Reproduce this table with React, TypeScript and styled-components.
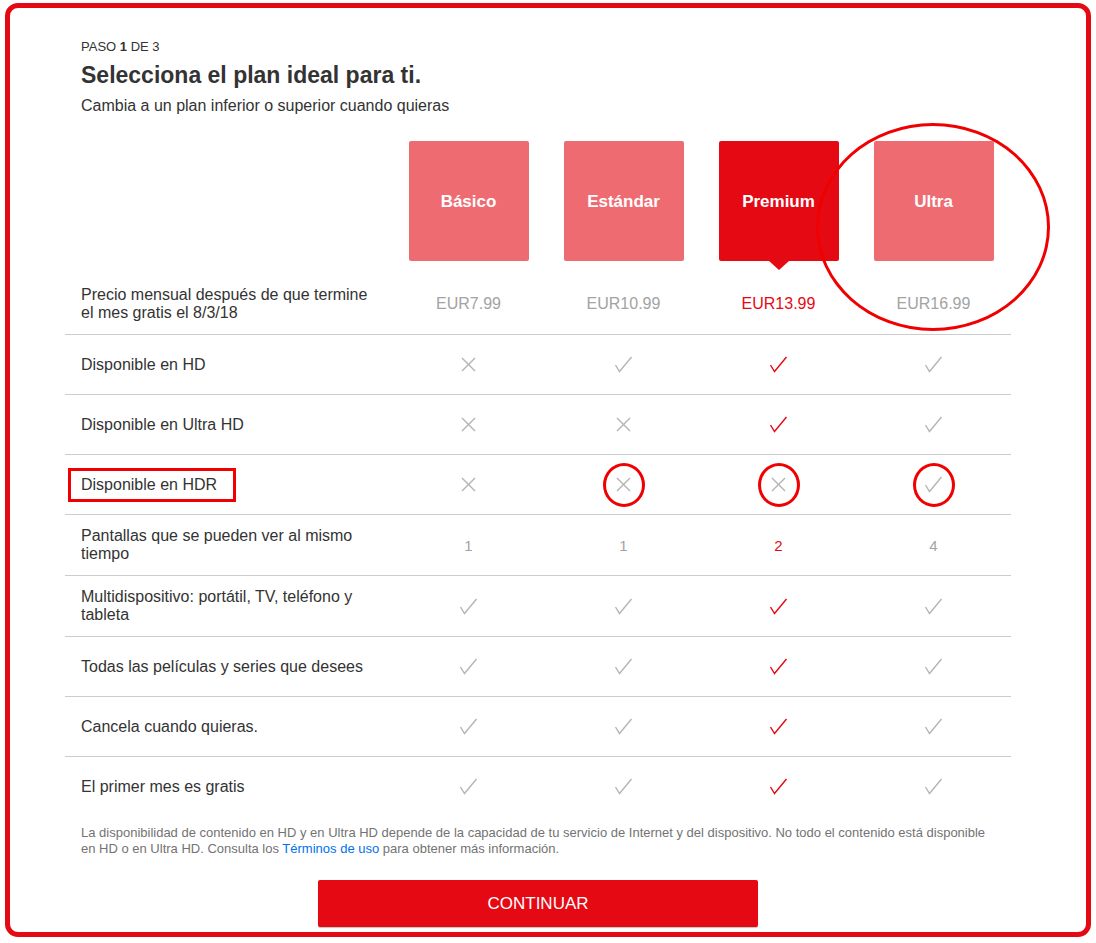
import * as React from 'react';
import styled, { createGlobalStyle } from 'styled-components';

const RED = '#e50914';
const MARK = '#f00000';

const GlobalStyle = createGlobalStyle`
  html, body {
    margin: 0;
    padding: 0;
    background: #fff;
  }
  body {
    font-family: "Liberation Sans", Arial, Helvetica, sans-serif;
    color: #333;
  }
`;

type Plan = { name: string, price: string, active?: boolean };

const plans: Plan[] = [
  { name: 'Básico', price: 'EUR7.99' },
  { name: 'Estándar', price: 'EUR10.99' },
  { name: 'Premium', price: 'EUR13.99', active: true },
  { name: 'Ultra', price: 'EUR16.99' },
];

// y = check, n = cross, anything else is printed as text
type Feature = { label: string, values: string[], markLabel?: boolean, markCells?: number[] };

const features: Feature[] = [
  { label: 'Disponible en HD', values: ['n', 'y', 'y', 'y'] },
  { label: 'Disponible en Ultra HD', values: ['n', 'n', 'y', 'y'] },
  { label: 'Disponible en HDR', values: ['n', 'n', 'n', 'y'], markLabel: true, markCells: [1, 2, 3] },
  { label: 'Pantallas que se pueden ver al mismo tiempo', values: ['1', '1', '2', '4'] },
  { label: 'Multidispositivo: portátil, TV, teléfono y tableta', values: ['y', 'y', 'y', 'y'] },
  { label: 'Todas las películas y series que desees', values: ['y', 'y', 'y', 'y'] },
  { label: 'Cancela cuando quieras.', values: ['y', 'y', 'y', 'y'] },
  { label: 'El primer mes es gratis', values: ['y', 'y', 'y', 'y'] },
];

const Check = ({ color }: { color: string }) => (
  <svg width="19" height="17" viewBox="0 0 19 17">
    <polyline points="1.5,9 5.5,15.5 17.5,1" fill="none" stroke={color} strokeWidth="1.4" />
  </svg>
);

const Cross = () => (
  <svg width="15" height="15" viewBox="0 0 15 15">
    <line x1="1" y1="1" x2="14" y2="14" stroke="#b5b5b5" strokeWidth="1.4" />
    <line x1="14" y1="1" x2="1" y2="14" stroke="#b5b5b5" strokeWidth="1.4" />
  </svg>
);

const renderValue = (value: string, active?: boolean) => {
  if (value === 'y') return <Check color={active ? RED : '#b5b5b5'} />;
  if (value === 'n') return <Cross />;
  return <Number active={active}>{value}</Number>;
};

export default function App() {
  return (
    <>
      <GlobalStyle />
      <Frame>
        <Content>
          <Header>
            <Step>PASO <b>1</b> DE 3</Step>
            <Title>Selecciona el plan ideal para ti.</Title>
            <Subtitle>Cambia a un plan inferior o superior cuando quieras</Subtitle>
          </Header>

          <Table>
            <PlanRow>
              <div />
              {plans.map((plan) => (
                <PlanCell key={plan.name}>
                  <PlanBox active={plan.active}>{plan.name}</PlanBox>
                  {plan.name === 'Ultra' && <BigRing />}
                </PlanCell>
              ))}
            </PlanRow>

            <PriceRow>
              <Label>Precio mensual después de que termine el mes gratis el 8/3/18</Label>
              {plans.map((plan) => (
                <Cell key={plan.name}>
                  <Price active={plan.active}>{plan.price}</Price>
                </Cell>
              ))}
            </PriceRow>

            {features.map((feature, rowIndex) => (
              <Row key={feature.label} last={rowIndex === features.length - 1}>
                <Label>
                  {feature.markLabel ? <Boxed>{feature.label}</Boxed> : feature.label}
                </Label>
                {feature.values.map((value, i) => (
                  <Cell key={i}>
                    {renderValue(value, plans[i].active)}
                    {feature.markCells && feature.markCells.includes(i) && <SmallRing />}
                  </Cell>
                ))}
              </Row>
            ))}
          </Table>

          <Note>
            La disponibilidad de contenido en HD y en Ultra HD depende de la capacidad de tu servicio de Internet y del dispositivo. No todo el contenido está disponible en HD o en Ultra HD. Consulta los <a href="#">Términos de uso</a> para obtener más información.
          </Note>

          <ButtonRow>
            <ContinueButton>CONTINUAR</ContinueButton>
          </ButtonRow>
        </Content>
      </Frame>
    </>
  );
}

const Frame = styled.div`
  margin: 3px 5px 6px 5px;
  height: 934px;
  box-sizing: border-box;
  border: 5px solid ${RED};
  border-radius: 13px;
  overflow: hidden;
`;

const Content = styled.div`
  width: 946px;
  margin-left: 55px;
`;

const Header = styled.div`
  padding: 31px 16px 0 16px;
`;

const Step = styled.div`
  font-size: 13px;
  line-height: 16px;
  color: #333;

  b {
    font-weight: 700;
  }
`;

const Title = styled.h1`
  margin: 6px 0 0 0;
  font-size: 23px;
  line-height: 28px;
  font-weight: 700;
  color: #333;
`;

const Subtitle = styled.div`
  margin-top: 7px;
  font-size: 16px;
  line-height: 20px;
  color: #333;
`;

const Table = styled.div`
  margin-top: 25px;
`;

const gridColumns = `
  display: grid;
  grid-template-columns: 326px repeat(4, 155px);
  align-items: center;
`;

const PlanRow = styled.div`
  ${gridColumns}
  position: relative;
  z-index: 2;
`;

const PlanCell = styled.div`
  position: relative;
  display: flex;
  justify-content: center;
`;

const PlanBox = styled.div<{ active?: boolean }>`
  position: relative;
  width: 120px;
  height: 120px;
  border-radius: 2px;
  background: ${(p) => (p.active ? RED : '#ef6b72')};
  color: #fff;
  font-size: 17px;
  font-weight: 700;
  display: flex;
  align-items: center;
  justify-content: center;
  padding-top: 2px;
  box-sizing: border-box;

  &::after {
    content: '';
    display: ${(p) => (p.active ? 'block' : 'none')};
    position: absolute;
    left: 50%;
    top: 100%;
    margin-left: -10px;
    border-left: 10px solid transparent;
    border-right: 10px solid transparent;
    border-top: 9px solid ${RED};
  }
`;

const BigRing = styled.div`
  position: absolute;
  left: -40px;
  top: -18px;
  width: 234px;
  height: 208px;
  box-sizing: border-box;
  border: 3px solid ${MARK};
  border-radius: 50%;
  pointer-events: none;
`;

const PriceRow = styled.div`
  ${gridColumns}
  padding-top: 13px;
  border-bottom: 1px solid #ccc;
`;

const Row = styled.div<{ last?: boolean }>`
  ${gridColumns}
  min-height: 59px;
  border-bottom: ${(p) => (p.last ? 'none' : '1px solid #ccc')};
`;

const Label = styled.div`
  padding: 12px 16px;
  font-size: 16px;
  line-height: 18px;
  color: #333;
  max-width: 292px;
`;

const Boxed = styled.span`
  position: relative;
  display: inline-block;

  &::after {
    content: '';
    position: absolute;
    left: -13px;
    right: -19px;
    top: -8px;
    bottom: -8px;
    border: 3px solid ${MARK};
  }
`;

const Cell = styled.div`
  position: relative;
  display: flex;
  align-items: center;
  justify-content: center;
  height: 100%;
  min-height: 36px;
`;

const SmallRing = styled.div`
  position: absolute;
  left: 50%;
  top: 50%;
  width: 42px;
  height: 44px;
  transform: translate(-50%, -50%);
  box-sizing: border-box;
  border: 3px solid ${MARK};
  border-radius: 50%;
`;

const Price = styled.div<{ active?: boolean }>`
  font-size: 16px;
  color: ${(p) => (p.active ? RED : '#a3a3a3')};
`;

const Number = styled.span<{ active?: boolean }>`
  font-size: 15px;
  color: ${(p) => (p.active ? RED : '#a3a3a3')};
`;

const Note = styled.p`
  margin: 9px 0 0 0;
  padding: 0 16px;
  font-size: 13px;
  line-height: 16px;
  color: #737373;

  a {
    color: #0071eb;
    text-decoration: none;
  }
`;

const ButtonRow = styled.div`
  display: flex;
  justify-content: center;
  margin-top: 23px;
`;

const ContinueButton = styled.button`
  width: 440px;
  height: 47px;
  border: none;
  border-radius: 2px;
  background: ${RED};
  color: #fff;
  font-family: "Liberation Sans", Arial, sans-serif;
  font-size: 17px;
  box-shadow: 0 1px 1px rgba(0, 0, 0, 0.25);
  cursor: pointer;
`;
